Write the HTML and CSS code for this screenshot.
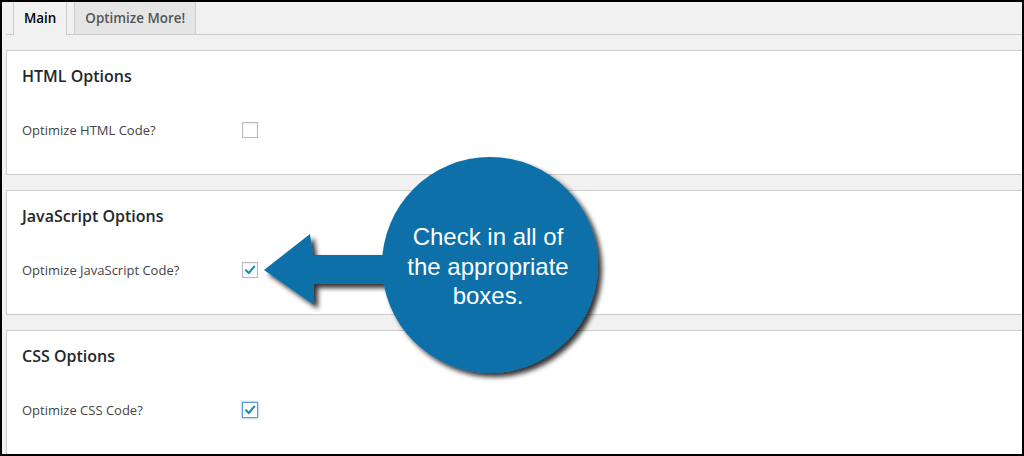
FILE: index.html
```html
<!DOCTYPE html>
<html lang="en">
<head>
<meta charset="utf-8">
<title>Options</title>
<link rel="stylesheet" href="styles.css">
</head>
<body>
<div class="frame">
  <div class="tabs">
    <div class="tab active">Main</div>
    <div class="tab">Optimize More!</div>
  </div>

  <section class="panel">
    <h2 class="panel-title">HTML Options</h2>
    <div class="row">
      <span class="label">Optimize HTML Code?</span>
      <span class="box"></span>
    </div>
  </section>

  <section class="panel">
    <h2 class="panel-title">JavaScript Options</h2>
    <div class="row">
      <span class="label">Optimize JavaScript Code?</span>
      <span class="box checked">
        <svg viewBox="0 0 16 16" width="16" height="16"><path d="M4 8.2 L6.8 11 L12.2 4.6" fill="none" stroke="#1e8cbe" stroke-width="2.2" stroke-linecap="round" stroke-linejoin="round"/></svg>
      </span>
    </div>
  </section>

  <section class="panel">
    <h2 class="panel-title">CSS Options</h2>
    <div class="row">
      <span class="label">Optimize CSS Code?</span>
      <span class="box checked focus">
        <svg viewBox="0 0 16 16" width="16" height="16"><path d="M4 8.2 L6.8 11 L12.2 4.6" fill="none" stroke="#1e8cbe" stroke-width="2.2" stroke-linecap="round" stroke-linejoin="round"/></svg>
      </span>
    </div>
  </section>

  <div class="callout">
    <svg class="callout-art" viewBox="0 0 380 250" width="380" height="250">
      <defs>
        <filter id="sh" x="-20%" y="-20%" width="150%" height="150%">
          <feGaussianBlur in="SourceAlpha" stdDeviation="2.5"/>
          <feOffset dx="4" dy="4" result="b"/>
          <feComponentTransfer><feFuncA type="linear" slope="0.8"/></feComponentTransfer>
          <feMerge><feMergeNode/><feMergeNode in="SourceGraphic"/></feMerge>
        </filter>
      </defs>
      <g filter="url(#sh)" fill="#0f70a9">
        <path d="M14 125 L60 89 L63 110 L160 110 L160 139 L64 139 L64 160 Z"/>
        <circle cx="240" cy="120" r="108"/>
      </g>
    </svg>
    <p class="callout-text">Check in all of<br>the appropriate<br>boxes.</p>
  </div>
</div>
</body>
</html>
```

FILE: styles.css
```css
* { box-sizing: border-box; }

html, body {
  margin: 0;
  padding: 0;
  background: #000;
}

.frame {
  position: relative;
  width: 1024px;
  height: 456px;
  border: 2px solid #000;
  background: #f1f1f1;
  overflow: hidden;
  font-family: "Open Sans", "Noto Sans", sans-serif;
  color: #444;
}

.tabs {
  display: flex;
  gap: 7px;
  height: 33px;
  margin-left: 4px;
  margin-right: -10px;
  padding-left: 7px;
  border-bottom: 1px solid #ccc;
}

.tab {
  height: 32px;
  padding: 0 10px;
  display: flex;
  align-items: center;
  font-size: 13.4px;
  font-weight: 600;
  color: #555;
  background: #e5e5e5;
  border: 1px solid #ccc;
  border-top: none;
  border-bottom: none;
}

.tab.active {
  height: 33px;
  margin-bottom: -1px;
  background: #f1f1f1;
  color: #000;
  padding-bottom: 1px;
}

.panel {
  margin: 15px -10px 0 4px;
  height: 125px;
  background: #fff;
  border: 1px solid #ccc;
  padding: 0 15px;
}

.panel-title {
  margin: 13px 0 0;
  font-size: 16px;
  font-weight: 600;
  line-height: 24px;
  color: #23282d;
}

.row {
  display: flex;
  align-items: center;
  margin-top: 34px;
  height: 16px;
}

.label {
  width: 220px;
  font-size: 13px;
  color: #444;
}

.box {
  width: 16px;
  height: 16px;
  border: 1px solid #b4b9be;
  background: #fff;
  box-shadow: inset 0 1px 2px rgba(0,0,0,0.07);
  display: flex;
  align-items: center;
  justify-content: center;
}

.box svg { display: block; margin: -1px; }

.box.focus {
  border-color: #5b9dd9;
  box-shadow: 0 0 2px rgba(30,140,190,0.8);
}

.callout {
  position: absolute;
  left: 248px;
  top: 143px;
  width: 380px;
  height: 250px;
}

.callout-art {
  display: block;
  position: absolute;
  left: 0;
  top: 0;
}

.callout-text {
  position: absolute;
  left: 138px;
  top: 77px;
  width: 200px;
  margin: 0;
  text-align: center;
  font-family: "Liberation Sans", Arial, sans-serif;
  font-size: 24px;
  line-height: 29.5px;
  color: #fff;
}
```
